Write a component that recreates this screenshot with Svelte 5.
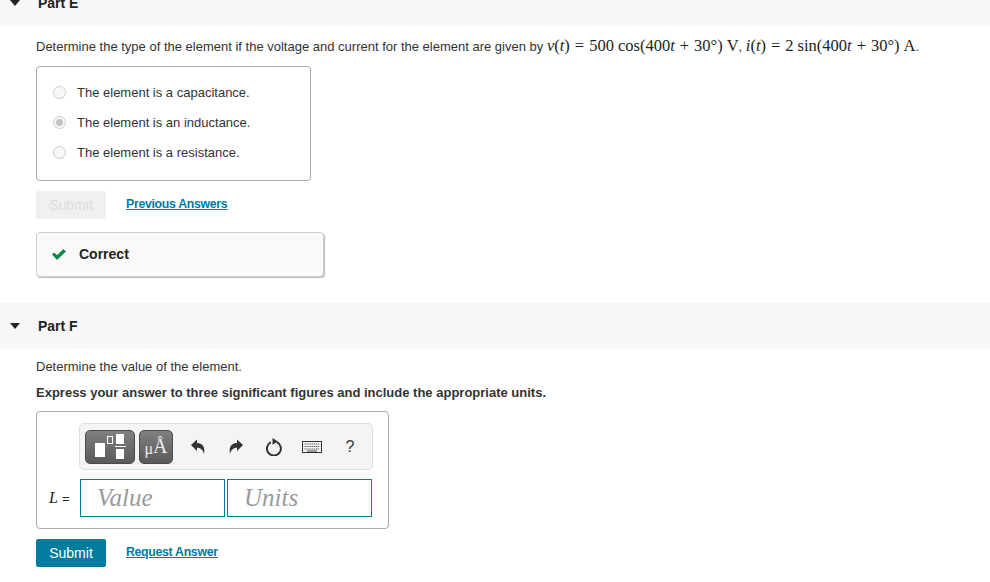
<script>
  const choices = [
    { label: 'The element is a capacitance.', selected: false },
    { label: 'The element is an inductance.', selected: true },
    { label: 'The element is a resistance.', selected: false }
  ];
</script>

<div class="page">
  <section class="part first">
    <header class="part-head">
      <span class="caret"></span>
      <h2>Part E</h2>
    </header>
    <div class="part-body">
      <p class="prompt">
        Determine the type of the element if the voltage and current for the element are given by
        <span class="math"><i>v</i>(<i>t</i>)<span class="op">=</span>500<span class="fn">cos</span>(400<i>t</i><span class="op">+</span>30°)<span class="fn">V</span></span>,
        <span class="math"><i>i</i>(<i>t</i>)<span class="op">=</span>2<span class="fn">sin</span>(400<i>t</i><span class="op">+</span>30°)<span class="fn">A</span></span>.
      </p>

      <div class="choices">
        {#each choices as choice}
          <div class="choice">
            <span class="radio" class:selected={choice.selected}></span>
            <span>{choice.label}</span>
          </div>
        {/each}
      </div>

      <div class="actions">
        <button class="submit" disabled>Submit</button>
        <a class="link" href="#previous">Previous Answers</a>
      </div>

      <div class="feedback">
        <svg class="check" width="14" height="11" viewBox="0 0 14 11">
          <path d="M0 5.6 L2.2 3.4 L5 6.2 L11.4 0 L14 2.4 L5 11 Z" fill="#0f8a43" />
        </svg>
        <strong>Correct</strong>
      </div>
    </div>
  </section>

  <section class="part">
    <header class="part-head">
      <span class="caret"></span>
      <h2>Part F</h2>
    </header>
    <div class="part-body">
      <p class="prompt second">Determine the value of the element.</p>
      <p class="instruction">Express your answer to three significant figures and include the appropriate units.</p>

      <div class="answer">
        <div class="toolbar">
          <button class="tool frac" aria-label="templates">
            <svg width="31" height="25" viewBox="0 0 31 25">
              <rect x="0" y="9" width="10" height="14" fill="#fff" />
              <rect x="12.5" y="2.5" width="5" height="7" fill="none" stroke="#fff" />
              <rect x="21" y="0" width="8" height="10" fill="#fff" />
              <rect x="20" y="12" width="11" height="1" fill="#fff" />
              <rect x="21" y="15" width="8" height="10" fill="#fff" />
            </svg>
          </button>
          <button class="tool units"><span class="mu">μ</span>Å</button>
          <div class="icons">
            <span class="cell">
              <svg width="14" height="15" viewBox="0 0 14 15">
                <path d="M0 6 L6 .5 V4 C10.5 4 14.5 7 13 15 C12 11 10 8.7 6 8.7 V12 Z" fill="#333" />
              </svg>
            </span>
            <span class="cell">
              <svg width="14" height="15" viewBox="0 0 14 15">
                <path d="M14 6 L8 .5 V4 C3.5 4 -.5 7 1 15 C2 11 4 8.7 8 8.7 V12 Z" fill="#333" />
              </svg>
            </span>
            <span class="cell">
              <svg width="16" height="18" viewBox="0 0 16 18">
                <path d="M4.8 4.2 A7 7 0 1 0 11 4.2" fill="none" stroke="#333" stroke-width="2" />
                <path d="M6.5 0 L12 3.4 L6.5 6.8 Z" fill="#333" />
              </svg>
            </span>
            <span class="cell">
              <svg width="20" height="12" viewBox="0 0 20 12">
                <rect x=".5" y=".5" width="19" height="11" fill="#f4f4f4" stroke="#333" />
                <path d="M2.5 3 H17.5 M2.5 5.5 H17.5 M2.5 8 H17.5" stroke="#555" stroke-width="1.2" stroke-dasharray="1.2 .7" />
                <path d="M5 10 H15" stroke="#444" />
              </svg>
            </span>
            <span class="cell help">?</span>
          </div>
        </div>
        <div class="inputs">
          <span class="var"><i>L</i> <span>=</span></span>
          <input placeholder="Value" />
          <input placeholder="Units" />
        </div>
      </div>

      <div class="actions last">
        <button class="submit active">Submit</button>
        <a class="link" href="#request">Request Answer</a>
      </div>
    </div>
  </section>
</div>

<style>
  :global(body) {
    margin: 0;
    background: #fff;
    overflow: hidden;
  }

  .page {
    height: 582px;
    overflow: hidden;
    font-family: "Liberation Sans", Arial, sans-serif;
    font-size: 13px;
    color: #333;
  }

  .first {
    margin-top: -20px;
  }

  .part-head {
    height: 46px;
    background: #f8f8f8;
    display: flex;
    align-items: center;
    padding-left: 10px;
  }

  .part-head h2 {
    margin: 0 0 0 18px;
    font-size: 14px;
    font-weight: bold;
    color: #222;
  }

  .caret {
    width: 0;
    height: 0;
    border-left: 5.5px solid transparent;
    border-right: 5.5px solid transparent;
    border-top: 6px solid #222;
  }

  .part-body {
    padding-left: 36px;
  }

  .prompt {
    margin: 0;
    padding-top: 11px;
    height: 29px;
    line-height: 18px;
    white-space: nowrap;
    box-sizing: border-box;
  }

  .prompt.second {
    padding-top: 9px;
    height: 27px;
  }

  .math {
    font-family: "Liberation Serif", "Times New Roman", serif;
    font-size: 16.5px;
    color: #222;
  }

  .op {
    margin: 0 5px;
  }

  .fn {
    margin-left: 4px;
  }

  .choices {
    margin-top: 11px;
    width: 275px;
    height: 115px;
    box-sizing: border-box;
    border: 1px solid #aaa;
    border-radius: 4px;
    padding: 10px 0 0 16px;
  }

  .choice {
    height: 30px;
    display: flex;
    align-items: center;
    gap: 11px;
  }

  .radio {
    width: 13px;
    height: 13px;
    box-sizing: border-box;
    border: 1px solid #ccc;
    border-radius: 50%;
    background: #f7f7f7;
    position: relative;
  }

  .radio.selected::after {
    content: "";
    position: absolute;
    inset: 2px;
    border-radius: 50%;
    background: #c4c4c4;
  }

  .actions {
    margin-top: 10px;
    display: flex;
    align-items: center;
    gap: 20px;
  }

  .submit {
    width: 70px;
    height: 28px;
    padding: 0;
    border: 0;
    border-radius: 2px;
    font: 14px "Liberation Sans", Arial, sans-serif;
    background: #f0f0f0;
    color: #dcdcdc;
  }

  .submit.active {
    background: #007c9c;
    color: #fff;
  }

  .link {
    font-weight: bold;
    font-size: 12.3px;
    letter-spacing: -0.3px;
    color: #007c9c;
    text-decoration: underline;
    margin-bottom: 3px;
  }

  .last {
    margin-top: 10px;
  }

  .feedback {
    margin-top: 13px;
    width: 288px;
    height: 45px;
    box-sizing: border-box;
    border: 1px solid #ccc;
    border-radius: 4px;
    box-shadow: 1px 1px 1px #bbb;
    background: #f9f9f9;
    display: flex;
    align-items: center;
    padding: 0 0 1px 15px;
    gap: 13px;
    margin-bottom: 26px;
  }

  .feedback strong {
    font-size: 14px;
    color: #222;
  }

  .check {
    flex: none;
  }

  .instruction {
    margin: 8px 0 0;
    line-height: 18px;
    font-weight: bold;
    color: #333;
  }

  .answer {
    margin-top: 9px;
    width: 353px;
    height: 118px;
    box-sizing: border-box;
    border: 1px solid #aaa;
    border-radius: 4px;
    padding: 11px 15px 0 0;
  }

  .toolbar {
    margin-left: 42px;
    height: 47px;
    box-sizing: border-box;
    border: 1px solid #ddd;
    border-radius: 5px;
    background: #f4f4f4;
    display: flex;
    align-items: center;
    padding-left: 5px;
    gap: 4px;
  }

  .tool {
    height: 34px;
    padding: 0;
    border: 1px solid #4a4a4a;
    border-radius: 5px;
    background: linear-gradient(#808080, #5a5a5a);
    display: flex;
    align-items: center;
    justify-content: center;
  }

  .frac {
    width: 50px;
  }

  .units {
    width: 34px;
    font: 20px "Liberation Serif", serif;
    color: #eee;
  }

  .mu {
    font-size: 16px;
    align-self: flex-end;
    margin-bottom: 5px;
  }

  .icons {
    display: flex;
    align-items: center;
    margin-left: 2px;
  }

  .cell {
    width: 38px;
    display: flex;
    align-items: center;
    justify-content: center;
  }

  .help {
    font-size: 16px;
    color: #333;
  }

  .inputs {
    margin-top: 9px;
    display: flex;
    align-items: center;
    gap: 2px;
  }

  .var {
    flex: none;
    width: 41px;
    box-sizing: border-box;
    padding-left: 12px;
    font: 16px "Liberation Serif", serif;
    color: #222;
  }

  .var span {
    font: 13px "Liberation Sans", sans-serif;
  }

  input {
    flex: none;
    width: 145px;
    height: 38px;
    box-sizing: border-box;
    border: 1px solid #007c9c;
    border-radius: 0;
    padding: 0 0 0 16px;
    font: italic 25px "Liberation Serif", serif;
    background: #fff;
  }

  input::placeholder {
    color: #9a9a9a;
    opacity: 1;
  }
</style>
